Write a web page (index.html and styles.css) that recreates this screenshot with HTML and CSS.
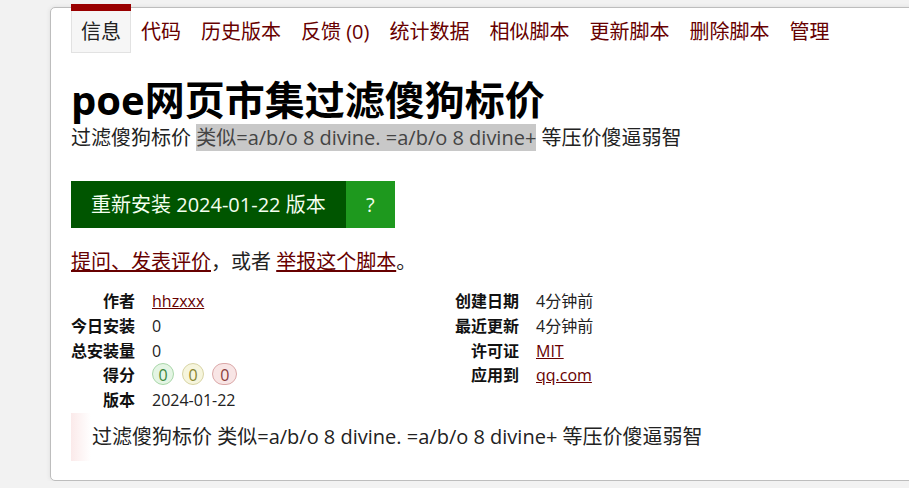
FILE: index.html
```html
<!DOCTYPE html>
<html lang="zh-CN">
<head>
    <meta charset="UTF-8">
    <meta name="viewport" content="width=device-width, initial-scale=1.0">
    <title>poe网页市集过滤傻狗标价</title>
    <link rel="stylesheet" href="styles.css">
</head>
<body>

<div class="script-info">

    <ul class="tabs">
        <li class="current">信息</li>
        <li><a href="#">代码</a></li>
        <li><a href="#">历史版本</a></li>
        <li><a href="#">反馈 (0)</a></li>
        <li><a href="#">统计数据</a></li>
        <li><a href="#">相似脚本</a></li>
        <li><a href="#">更新脚本</a></li>
        <li><a href="#">删除脚本</a></li>
        <li><a href="#">管理</a></li>
    </ul>

    <h2 class="title">poe网页市集过滤傻狗标价</h2>
    <p class="description">过滤傻狗标价 <span class="selected">类似=a/b/o 8 divine. =a/b/o 8 divine+</span> 等压价傻逼弱智</p>

    <div class="install-area">
        <a class="install-link" href="#">重新安装 2024-01-22 版本</a><a class="install-help" href="#">?</a>
    </div>

    <p class="feedback"><a href="#">提问、发表评价</a>，或者 <a href="#">举报这个脚本</a>。</p>

    <div class="meta">
        <dl>
            <dt>作者</dt>
            <dd><a href="#">hhzxxx</a></dd>
            <dt>今日安装</dt>
            <dd>0</dd>
            <dt>总安装量</dt>
            <dd>0</dd>
            <dt>得分</dt>
            <dd>
                <span class="rating good">0</span>
                <span class="rating ok">0</span>
                <span class="rating bad">0</span>
            </dd>
            <dt>版本</dt>
            <dd>2024-01-22</dd>
        </dl>
        <dl>
            <dt>创建日期</dt>
            <dd>4分钟前</dd>
            <dt>最近更新</dt>
            <dd>4分钟前</dd>
            <dt>许可证</dt>
            <dd><a href="#">MIT</a></dd>
            <dt>应用到</dt>
            <dd><a href="#">qq.com</a></dd>
        </dl>
    </div>

    <div class="additional-info">
        过滤傻狗标价 类似=a/b/o 8 divine. =a/b/o 8 divine+ 等压价傻逼弱智
    </div>

</div>

</body>
</html>
```

FILE: styles.css
```css
body {
    font-family: "Open Sans", "Noto Sans CJK SC", sans-serif;
    font-size: 20px;
    color: #222;
    background-color: #f2f2f2;
    margin: 0;
    padding: 7px 0 0 50px;
    overflow: hidden;
}
a {
    color: #670000;
}
.script-info {
    width: 920px;
    background-color: #fff;
    border: 1px solid #bdbdbd;
    border-radius: 5px;
    box-shadow: 0 0 4px #ddd;
    padding: 0 20px 19px 20px;
}
.tabs {
    list-style: none;
    margin: -4px 0 0 0;
    padding: 0;
    display: flex;
}
.tabs li {
    padding: 9px 10px 10px 10px;
    line-height: 23px;
    border-top: 7px solid transparent;
}
.tabs li a {
    text-decoration: none;
}
.tabs li.current {
    border-top-color: #990000;
    box-shadow: inset 1px 0 0 #e2e2e2, inset -1px 0 0 #e2e2e2, inset 0 -1px 0 #e2e2e2;
    background-color: #f6f6f6;
}
.title {
    font-size: 40px;
    line-height: 40px;
    margin: 27px 0 0 0;
    color: #000;
}
.description {
    margin: 5px 0 0 0;
    line-height: 26px;
}
.selected {
    background-color: #c8c8c8;
    color: #444;
}
.install-area {
    display: flex;
    margin-top: 30px;
}
.install-link,
.install-help {
    color: #f4fff0;
    text-decoration: none;
    line-height: 47px;
}
.install-link {
    background-color: #005500;
    padding: 0 20px;
}
.install-help {
    background-color: #1e991e;
    width: 49px;
    text-align: center;
}
.feedback {
    margin: 21px 0 0 0;
    line-height: 26px;
}
.meta {
    display: grid;
    grid-template-columns: 384px 384px;
    margin-top: 14px;
    font-size: 16px;
}
.meta dl {
    display: grid;
    grid-template-columns: 64px auto;
    align-content: start;
    column-gap: 17px;
    margin: 0;
    line-height: 24.8px;
}
.meta dt {
    font-weight: bold;
    text-align: right;
    color: #111;
}
.meta dd {
    margin: 0;
}
.rating {
    display: inline-block;
    min-width: 22px;
    height: 22px;
    line-height: 22px;
    text-align: center;
    border: 1px solid;
    border-radius: 12px;
    margin-right: 4px;
    box-sizing: border-box;
    padding: 0 1px;
}
.rating.bad {
    min-width: 25px;
}
.good {
    background-color: #e4f5e4;
    border-color: #a9d7a9;
    color: #3c873c;
}
.ok {
    background-color: #f6f5dd;
    border-color: #d8d4a4;
    color: #878530;
}
.bad {
    background-color: #f8e5e5;
    border-color: #dba8a8;
    color: #8a3c3c;
}
.additional-info {
    padding: 11px 0 11px 21px;
    line-height: 26px;
    background: linear-gradient(to right, #fbeaea, #fff 20px);
}
```
